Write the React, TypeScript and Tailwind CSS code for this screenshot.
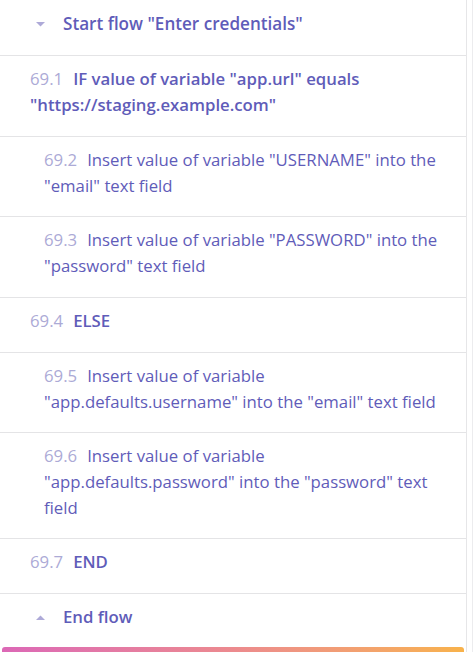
import React from "react";

const font = { fontFamily: '"Open Sans", "Noto Sans", sans-serif' };

function Num({ n }: { n: string }) {
  return <span className="mr-[10px] font-normal text-[#acaad6]">{n}</span>;
}

function Step({
  n,
  children,
  indent,
  bold,
  tall,
}: {
  n: string;
  children: React.ReactNode;
  indent?: boolean;
  bold?: boolean;
  tall?: boolean;
}) {
  return (
    <div
      className={`border-b border-[#e4e4e6] pt-[10px] pr-[16px] ${tall ? "pb-[18px]" : "pb-[17px]"} ${
        indent ? "pl-[44px]" : "pl-[30px]"
      }`}
    >
      <p className={`text-[16.75px] leading-[26px] text-[#5f5cb9] ${bold ? "font-semibold" : "font-normal"}`}>
        <Num n={n} />
        {children}
      </p>
    </div>
  );
}

function Flow({ label, up, first }: { label: string; up?: boolean; first?: boolean }) {
  return (
    <div
      className={`flex items-center ${
        first ? "border-b border-[#e4e4e6] pt-[11px] pb-[18px]" : "pt-[10px] pb-[17px]"
      } pl-[35px]`}
    >
      <svg width="11" height="7" viewBox="0 0 11 7" className="mr-[17px]">
        {up ? (
          <polygon points="1,6 10,6 5.5,1.5" fill="#aeaad8" />
        ) : (
          <polygon points="1,1 10,1 5.5,5.5" fill="#aeaad8" />
        )}
      </svg>
      <span
        className={`${first ? "text-[17.1px]" : "text-[16.75px]"} font-semibold leading-[26px] text-[#5f5cb9]`}
      >
        {label}
      </span>
    </div>
  );
}

export default function App() {
  return (
    <div className="flex h-[652px] w-[474px] overflow-hidden bg-white" style={font}>
      <div className="flex w-[467px] flex-col border-r border-[#e6e6e8]">
        <Flow label={'Start flow "Enter credentials"'} first />
        <Step n="69.1" bold tall>
          IF value of variable "app.url" equals "https://staging.example.com"
        </Step>
        <Step n="69.2" indent>
          Insert value of variable "USERNAME" into the "email" text field
        </Step>
        <Step n="69.3" indent tall>
          Insert value of variable "PASSWORD" into the "password" text field
        </Step>
        <Step n="69.4" bold tall>
          ELSE
        </Step>
        <Step n="69.5" indent>
          Insert value of variable "app.defaults.username" into the "email" text field
        </Step>
        <Step n="69.6" indent>
          Insert value of variable "app.defaults.password" into the "password" text field
        </Step>
        <Step n="69.7" bold tall>
          END
        </Step>
        <Flow label="End flow" up />
        <div className="mx-[2px] h-[6px] shrink-0 rounded-t-[3px] bg-gradient-to-r from-[#dc68b6] via-[#ec8a8e] to-[#f8b24a]" />
      </div>
      <div className="flex-1 bg-white pl-[5px]">
        <div className="h-full w-px bg-[#ececee]" />
      </div>
    </div>
  );
}
